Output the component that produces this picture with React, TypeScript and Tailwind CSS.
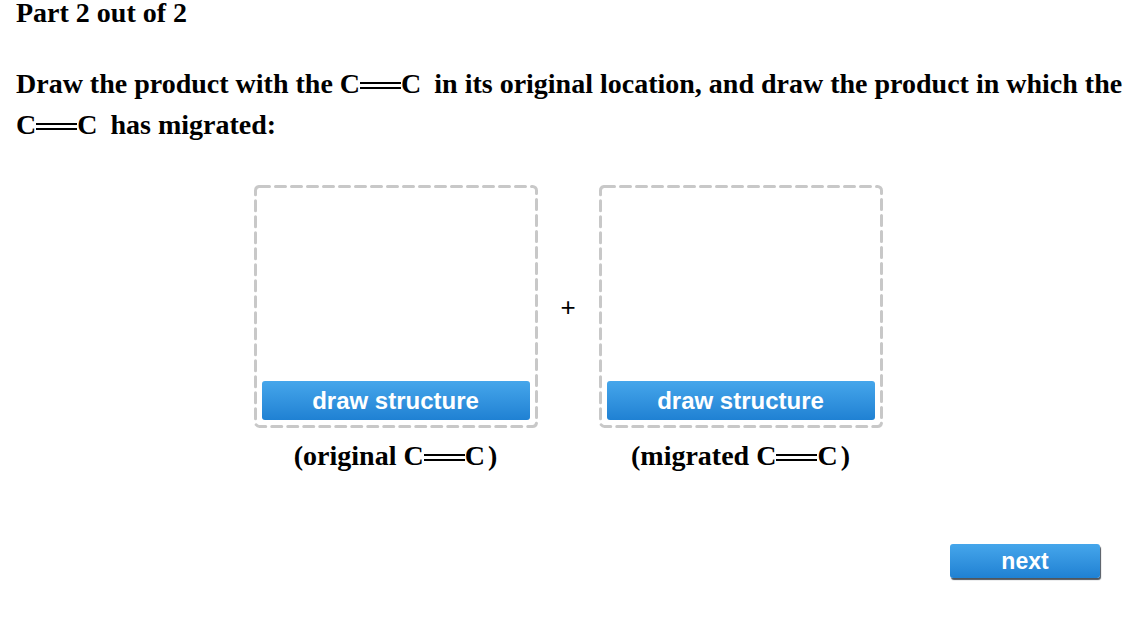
import React from "react";

const serif = { fontFamily: '"Liberation Serif", "Times New Roman", serif' };
const sans = { fontFamily: '"Liberation Sans", Arial, sans-serif' };

// C=C written as two letters joined by a double-bond rule
function DoubleBond({ after = "mr-[6px]" }: { after?: string }) {
  return (
    <span className={`whitespace-nowrap ${after}`}>
      C
      <span className="inline-block h-[7px] w-[41px] border-y-2 border-black align-[4px]" />
      C
    </span>
  );
}

function DrawBox({ label }: { label: React.ReactNode }) {
  return (
    <div className="flex flex-col items-center">
      <div className="relative flex h-[243px] w-[284px] flex-col justify-end p-[8px]">
        {/* dashed drop frame */}
        <svg className="pointer-events-none absolute inset-0" width="284" height="243">
          <rect
            x="1.5"
            y="1.5"
            width="281"
            height="240"
            rx="4"
            fill="none"
            stroke="#c8c8c8"
            strokeWidth="3"
            strokeDasharray="10 6"
            strokeLinecap="round"
          />
        </svg>
        <button
          className="relative h-[39px] w-full rounded-[3px] bg-linear-to-b from-[#45a6eb] to-[#1f81d3] text-[24px] font-bold text-white"
          style={sans}
        >
          draw structure
        </button>
      </div>
      <div className="mt-[13px] text-[28px] font-bold leading-[30px] text-black" style={serif}>
        {label}
      </div>
    </div>
  );
}

export default function App() {
  return (
    <div className="min-h-[622px] w-[1140px] bg-white pt-[1px] text-black" style={serif}>
      <div className="px-[16px]">
        <h1 className="text-[28px] font-bold leading-[24px]">Part 2 out of 2</h1>
        <p className="mt-[38px] text-[28px] font-bold leading-[41px]">
          Draw the product with the <DoubleBond /> in its original location, and draw the
          product in which the <DoubleBond /> has migrated:
        </p>
      </div>

      <div className="mt-[40px] flex justify-center pr-[4px]">
        <DrawBox
          label={
            <>
              (original <DoubleBond after="mr-[3px]" />)
            </>
          }
        />
        <div className="flex h-[243px] w-[61px] items-center justify-center">
          <span className="text-[26px] font-light leading-none" style={sans}>
            +
          </span>
        </div>
        <DrawBox
          label={
            <>
              (migrated <DoubleBond after="mr-[3px]" />)
            </>
          }
        />
      </div>

      <div className="mt-[73px] flex justify-end pr-[40px]">
        <button
          className="h-[34px] w-[150px] rounded-[3px] bg-linear-to-b from-[#45a6eb] to-[#1f81d3] text-[23px] font-bold text-white shadow-[1px_2px_1px_rgba(20,30,40,0.75)]"
          style={sans}
        >
          next
        </button>
      </div>
    </div>
  );
}
